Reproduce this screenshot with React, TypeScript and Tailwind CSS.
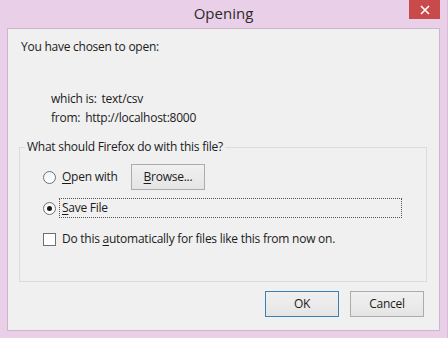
import React from "react";

function Radio({ checked }: { checked?: boolean }) {
  return (
    <span className="flex h-[13px] w-[13px] shrink-0 items-center justify-center rounded-full border border-[#707070] bg-gradient-to-b from-[#f4f4f4] to-[#ffffff]">
      {checked && <span className="h-[5px] w-[5px] rounded-full bg-[#1a1a1a]" />}
    </span>
  );
}

function Button({ children, primary }: { children: React.ReactNode; primary?: boolean }) {
  return (
    <button
      className={
        primary
          ? "flex h-[26px] w-[74px] items-center justify-center border border-[#3c7fb1] bg-gradient-to-b from-[#f0f0f0] to-[#e5e5e5] text-[12px] text-[#1b1b1b]"
          : "flex h-[26px] w-[74px] items-center justify-center border border-[#acacac] bg-gradient-to-b from-[#f0f0f0] to-[#e5e5e5] text-[12px] text-[#1b1b1b]"
      }
    >
      {children}
    </button>
  );
}

export default function App() {
  return (
    <div className="flex h-[338px] w-[448px] flex-col border-r border-[#d8bcd6] bg-[#e9d0e8] font-['Segoe_UI','Open_Sans',sans-serif] text-[#1b1b1b]">
      {/* title bar */}
      <div className="relative flex h-[28px] shrink-0 items-center justify-center">
        <span className="mt-[-2px] text-[15px] text-[#2b2b2b]">Opening</span>
        <div className="absolute right-[7px] top-0 flex h-[19px] w-[31px] items-center justify-center bg-[#c94a4a]">
          <svg width="10" height="10" viewBox="0 0 10 10">
            <path d="M1 1L9 9M9 1L1 9" stroke="#fff" strokeWidth="1.6" />
          </svg>
        </div>
      </div>

      {/* client area */}
      <div className="ml-[7px] flex h-[303px] w-[433px] flex-col border border-[#cdb6cb] bg-[#f0f0f0] text-[12px] leading-[16px] tracking-[-0.25px]">
        <p className="ml-[13px] mt-[10px]">You have chosen to open:</p>

        <div className="ml-[43px] mt-[36px] flex flex-col gap-[3px]">
          <div className="flex gap-[5px]">
            <span>which is:</span>
            <span>text/csv</span>
          </div>
          <div className="flex gap-[5px]">
            <span>from:</span>
            <span>http://localhost:8000</span>
          </div>
        </div>

        <fieldset className="ml-[11px] mt-[13px] h-[143px] w-[408px] border border-[#dcdcdc] px-[6px]">
          <legend className="ml-[-1px] px-[2px]">What should Firefox do with this file?</legend>

          <div className="ml-[17px] mt-[9px] flex items-center">
            <Radio />
            <span className="ml-[6px] w-[69px]">
              <u className="underline-offset-2">O</u>pen with
            </span>
            <button className="flex h-[26px] w-[74px] items-center justify-center border border-[#acacac] bg-gradient-to-b from-[#f0f0f0] to-[#e5e5e5]">
              <span>
                <u className="underline-offset-2">B</u>rowse...
              </span>
            </button>
          </div>

          <div className="ml-[17px] mt-[8px] flex items-center">
            <Radio checked />
            <span className="ml-[3px] flex h-[20px] w-[343px] items-center border border-dotted border-[#555] pl-[2px]">
              <u className="underline-offset-2">S</u>ave File
            </span>
          </div>

          <div className="ml-[17px] mt-[13px] flex items-center">
            <span className="h-[13px] w-[13px] shrink-0 border border-[#707070] bg-white" />
            <span className="ml-[6px]">
              Do this <u className="underline-offset-2">a</u>utomatically for files like this from now on.
            </span>
          </div>
        </fieldset>

        <div className="mr-[15px] mt-[9px] flex justify-end gap-[11px]">
          <Button primary>OK</Button>
          <Button>Cancel</Button>
        </div>
      </div>
    </div>
  );
}
